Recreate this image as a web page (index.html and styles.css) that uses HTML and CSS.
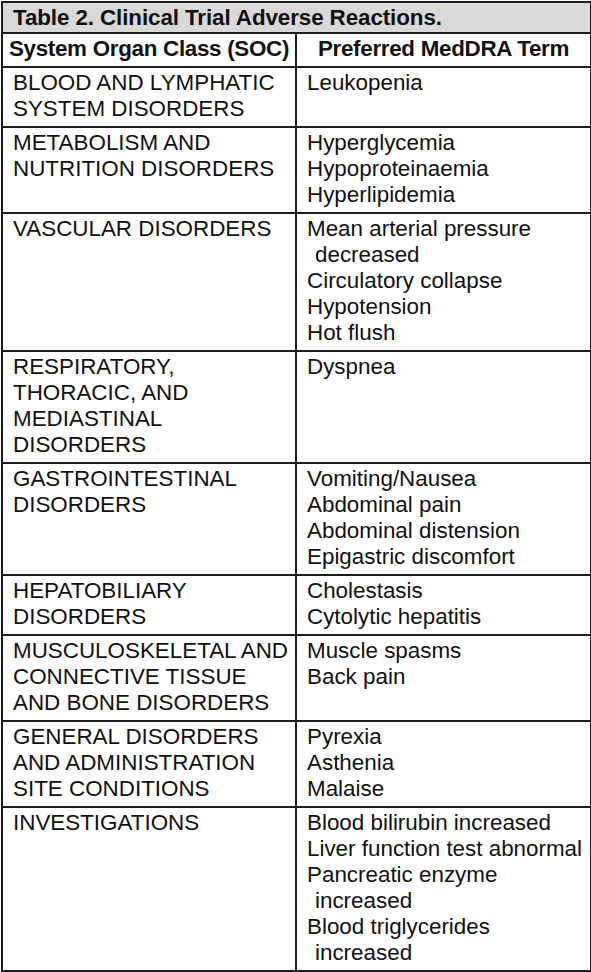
FILE: index.html
```html
<!DOCTYPE html>
<html lang="en">
<head>
<meta charset="utf-8">
<title>Table 2. Clinical Trial Adverse Reactions.</title>
<link rel="stylesheet" href="styles.css">
</head>
<body>
<table class="ar-table">
  <colgroup>
    <col class="col-soc">
    <col class="col-term">
  </colgroup>
  <thead>
    <tr class="title-row">
      <th colspan="2" class="title">Table 2. Clinical Trial Adverse Reactions.</th>
    </tr>
    <tr class="head-row">
      <th class="head">System Organ Class (SOC)</th>
      <th class="head">Preferred MedDRA Term</th>
    </tr>
  </thead>
  <tbody>
    <tr>
      <td class="soc">BLOOD AND LYMPHATIC SYSTEM DISORDERS</td>
      <td class="terms"><div class="term">Leukopenia</div></td>
    </tr>
    <tr>
      <td class="soc">METABOLISM AND NUTRITION DISORDERS</td>
      <td class="terms">
        <div class="term">Hyperglycemia</div>
        <div class="term">Hypoproteinaemia</div>
        <div class="term">Hyperlipidemia</div>
      </td>
    </tr>
    <tr>
      <td class="soc">VASCULAR DISORDERS</td>
      <td class="terms">
        <div class="term">Mean arterial pressure decreased</div>
        <div class="term">Circulatory collapse</div>
        <div class="term">Hypotension</div>
        <div class="term">Hot flush</div>
      </td>
    </tr>
    <tr>
      <td class="soc">RESPIRATORY, THORACIC, AND MEDIASTINAL DISORDERS</td>
      <td class="terms"><div class="term">Dyspnea</div></td>
    </tr>
    <tr>
      <td class="soc">GASTROINTESTINAL DISORDERS</td>
      <td class="terms">
        <div class="term">Vomiting/Nausea</div>
        <div class="term">Abdominal pain</div>
        <div class="term">Abdominal distension</div>
        <div class="term">Epigastric discomfort</div>
      </td>
    </tr>
    <tr>
      <td class="soc">HEPATOBILIARY DISORDERS</td>
      <td class="terms">
        <div class="term">Cholestasis</div>
        <div class="term">Cytolytic hepatitis</div>
      </td>
    </tr>
    <tr>
      <td class="soc">MUSCULOSKELETAL AND CONNECTIVE TISSUE AND BONE DISORDERS</td>
      <td class="terms">
        <div class="term">Muscle spasms</div>
        <div class="term">Back pain</div>
      </td>
    </tr>
    <tr>
      <td class="soc">GENERAL DISORDERS AND ADMINISTRATION SITE CONDITIONS</td>
      <td class="terms">
        <div class="term">Pyrexia</div>
        <div class="term">Asthenia</div>
        <div class="term">Malaise</div>
      </td>
    </tr>
    <tr>
      <td class="soc">INVESTIGATIONS</td>
      <td class="terms">
        <div class="term">Blood bilirubin increased</div>
        <div class="term">Liver function test abnormal</div>
        <div class="term">Pancreatic enzyme increased</div>
        <div class="term">Blood triglycerides increased</div>
      </td>
    </tr>
  </tbody>
</table>
</body>
</html>
```

FILE: styles.css
```css
html, body {
  margin: 0;
  padding: 0;
  background: #ffffff;
}

body {
  font-family: "Liberation Sans", Arial, Helvetica, sans-serif;
  font-size: 22.4px;
  line-height: 26px;
  color: #111111;
}

.ar-table {
  margin: 1px;
  width: 589px;
  border-collapse: collapse;
  table-layout: fixed;
  border: 2px solid #1c1c1c;
}

.col-soc {
  width: 294px;
}

.col-term {
  width: 295px;
}

.ar-table th,
.ar-table td {
  border: 2px solid #1c1c1c;
  padding: 2px 8px 4px 10px;
  vertical-align: top;
}

.ar-table .title {
  background: #d9d9d9;
  font-weight: bold;
  text-align: left;
  letter-spacing: -0.1px;
  padding-top: 2px;
  padding-bottom: 1px;
}

.ar-table .head {
  font-weight: bold;
  text-align: center;
  padding-left: 0;
  padding-right: 0;
  letter-spacing: -0.3px;
  white-space: nowrap;
}

.ar-table .soc {
  text-align: left;
  padding-right: 1px;
}

.ar-table .terms {
  text-align: left;
  padding-right: 2px;
}

.term {
  padding-left: 8px;
  text-indent: -8px;
}
```
